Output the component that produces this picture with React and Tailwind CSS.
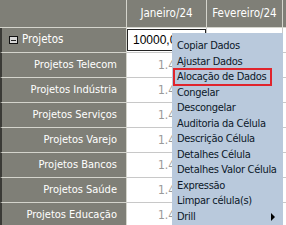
const ROWS = [
  'Projetos Telecom',
  'Projetos Indústria',
  'Projetos Serviços',
  'Projetos Varejo',
  'Projetos Bancos',
  'Projetos Saúde',
  'Projetos Educação',
]

const MENU = [
  'Copiar Dados',
  'Ajustar Dados',
  'Alocação de Dados',
  'Congelar',
  'Descongelar',
  'Auditoria da Célula',
  'Descrição Célula',
  'Detalhes Célula',
  'Detalhes Valor Célula',
  'Expressão',
  'Limpar célula(s)',
  'Drill',
]

const font = { fontFamily: '"DejaVu Sans Condensed", "DejaVu Sans", sans-serif' }

export default function App() {
  return (
    <div className="relative w-[286px] h-[225px] overflow-hidden bg-white text-[11px]" style={font}>
      {/* header */}
      <div className="flex h-[28px] bg-[#7f7f77] border-b border-[#d4d4cc] text-white">
        <div className="w-[127px] shrink-0 border-r border-[#d4d4cc]" />
        <div className="w-[80px] shrink-0 border-r border-[#d4d4cc] flex items-center justify-center text-[11.5px]">
          Janeiro/24
        </div>
        <div className="w-[76px] shrink-0 border-r border-[#d4d4cc] flex items-center justify-center text-[11.5px]">
          Fevereiro/24
        </div>
        <div className="flex-1" />
      </div>

      {/* Projetos */}
      <div className="flex h-[25px] border-b border-[#c8c8c8]">
        <div className="w-[127px] shrink-0 bg-[#7f7f77] border-l-2 border-l-[#3a3a36] border-r border-r-[#d4d4cc] border-b border-b-[#d4d4cc] -mb-px flex items-center pl-[7px] text-white text-[11.5px]">
          <span className="w-[9px] h-[8px] bg-[#d8d8d8] border border-[#111] flex items-center justify-center mr-[4px]">
            <span className="w-[5px] h-px bg-[#222]" />
          </span>
          Projetos
        </div>
        <div className="w-[80px] shrink-0 border-r border-[#c8c8c8] flex items-center">
          <div
            className="w-[79px] h-[22px] border border-[#222] bg-white flex items-center pl-[5px] text-[12px] text-black whitespace-nowrap overflow-hidden"
            style={{ fontFamily: '"Liberation Sans", Arial, sans-serif' }}
          >
            10000,00000
          </div>
        </div>
        <div className="w-[76px] shrink-0 border-r border-[#c8c8c8]" />
        <div className="flex-1" />
      </div>

      {ROWS.map((r) => (
        <div key={r} className="flex h-[25px] border-b border-[#c8c8c8]">
          <div className="w-[127px] shrink-0 bg-[#7f7f77] border-l-2 border-l-[#3a3a36] border-r border-r-[#d4d4cc] border-b border-b-[#d4d4cc] -mb-px flex items-center justify-end pr-[9px] text-white text-[11px] whitespace-nowrap">
            {r}
          </div>
          <div className="w-[80px] shrink-0 border-r border-[#c8c8c8] flex items-center pl-[31px] text-[#999] text-[12px] whitespace-nowrap overflow-hidden">
            1.428,57
          </div>
          <div className="w-[76px] shrink-0 border-r border-[#c8c8c8]" />
          <div className="flex-1" />
        </div>
      ))}

      {/* context menu */}
      <div className="absolute left-[172px] top-[33px] w-[111px] h-[200px] bg-[#b9c9dc] pt-[5px] text-[#0c1828] text-[11px] tracking-[-0.3px]">
        {MENU.map((m) => (
          <div key={m} className="relative h-[15.5px] flex items-center pl-[5px] leading-none whitespace-nowrap">
            {m === 'Alocação de Dados' && (
              <span className="absolute left-[1px] top-[-1px] w-[99px] h-[17.5px] border-2 border-[#e0242c]" />
            )}
            <span className="relative">{m}</span>
            {m === 'Drill' && (
              <span className="absolute right-[8px] top-[4px] w-0 h-0 border-y-[4px] border-y-transparent border-l-[4px] border-l-black" />
            )}
          </div>
        ))}
      </div>
    </div>
  )
}
